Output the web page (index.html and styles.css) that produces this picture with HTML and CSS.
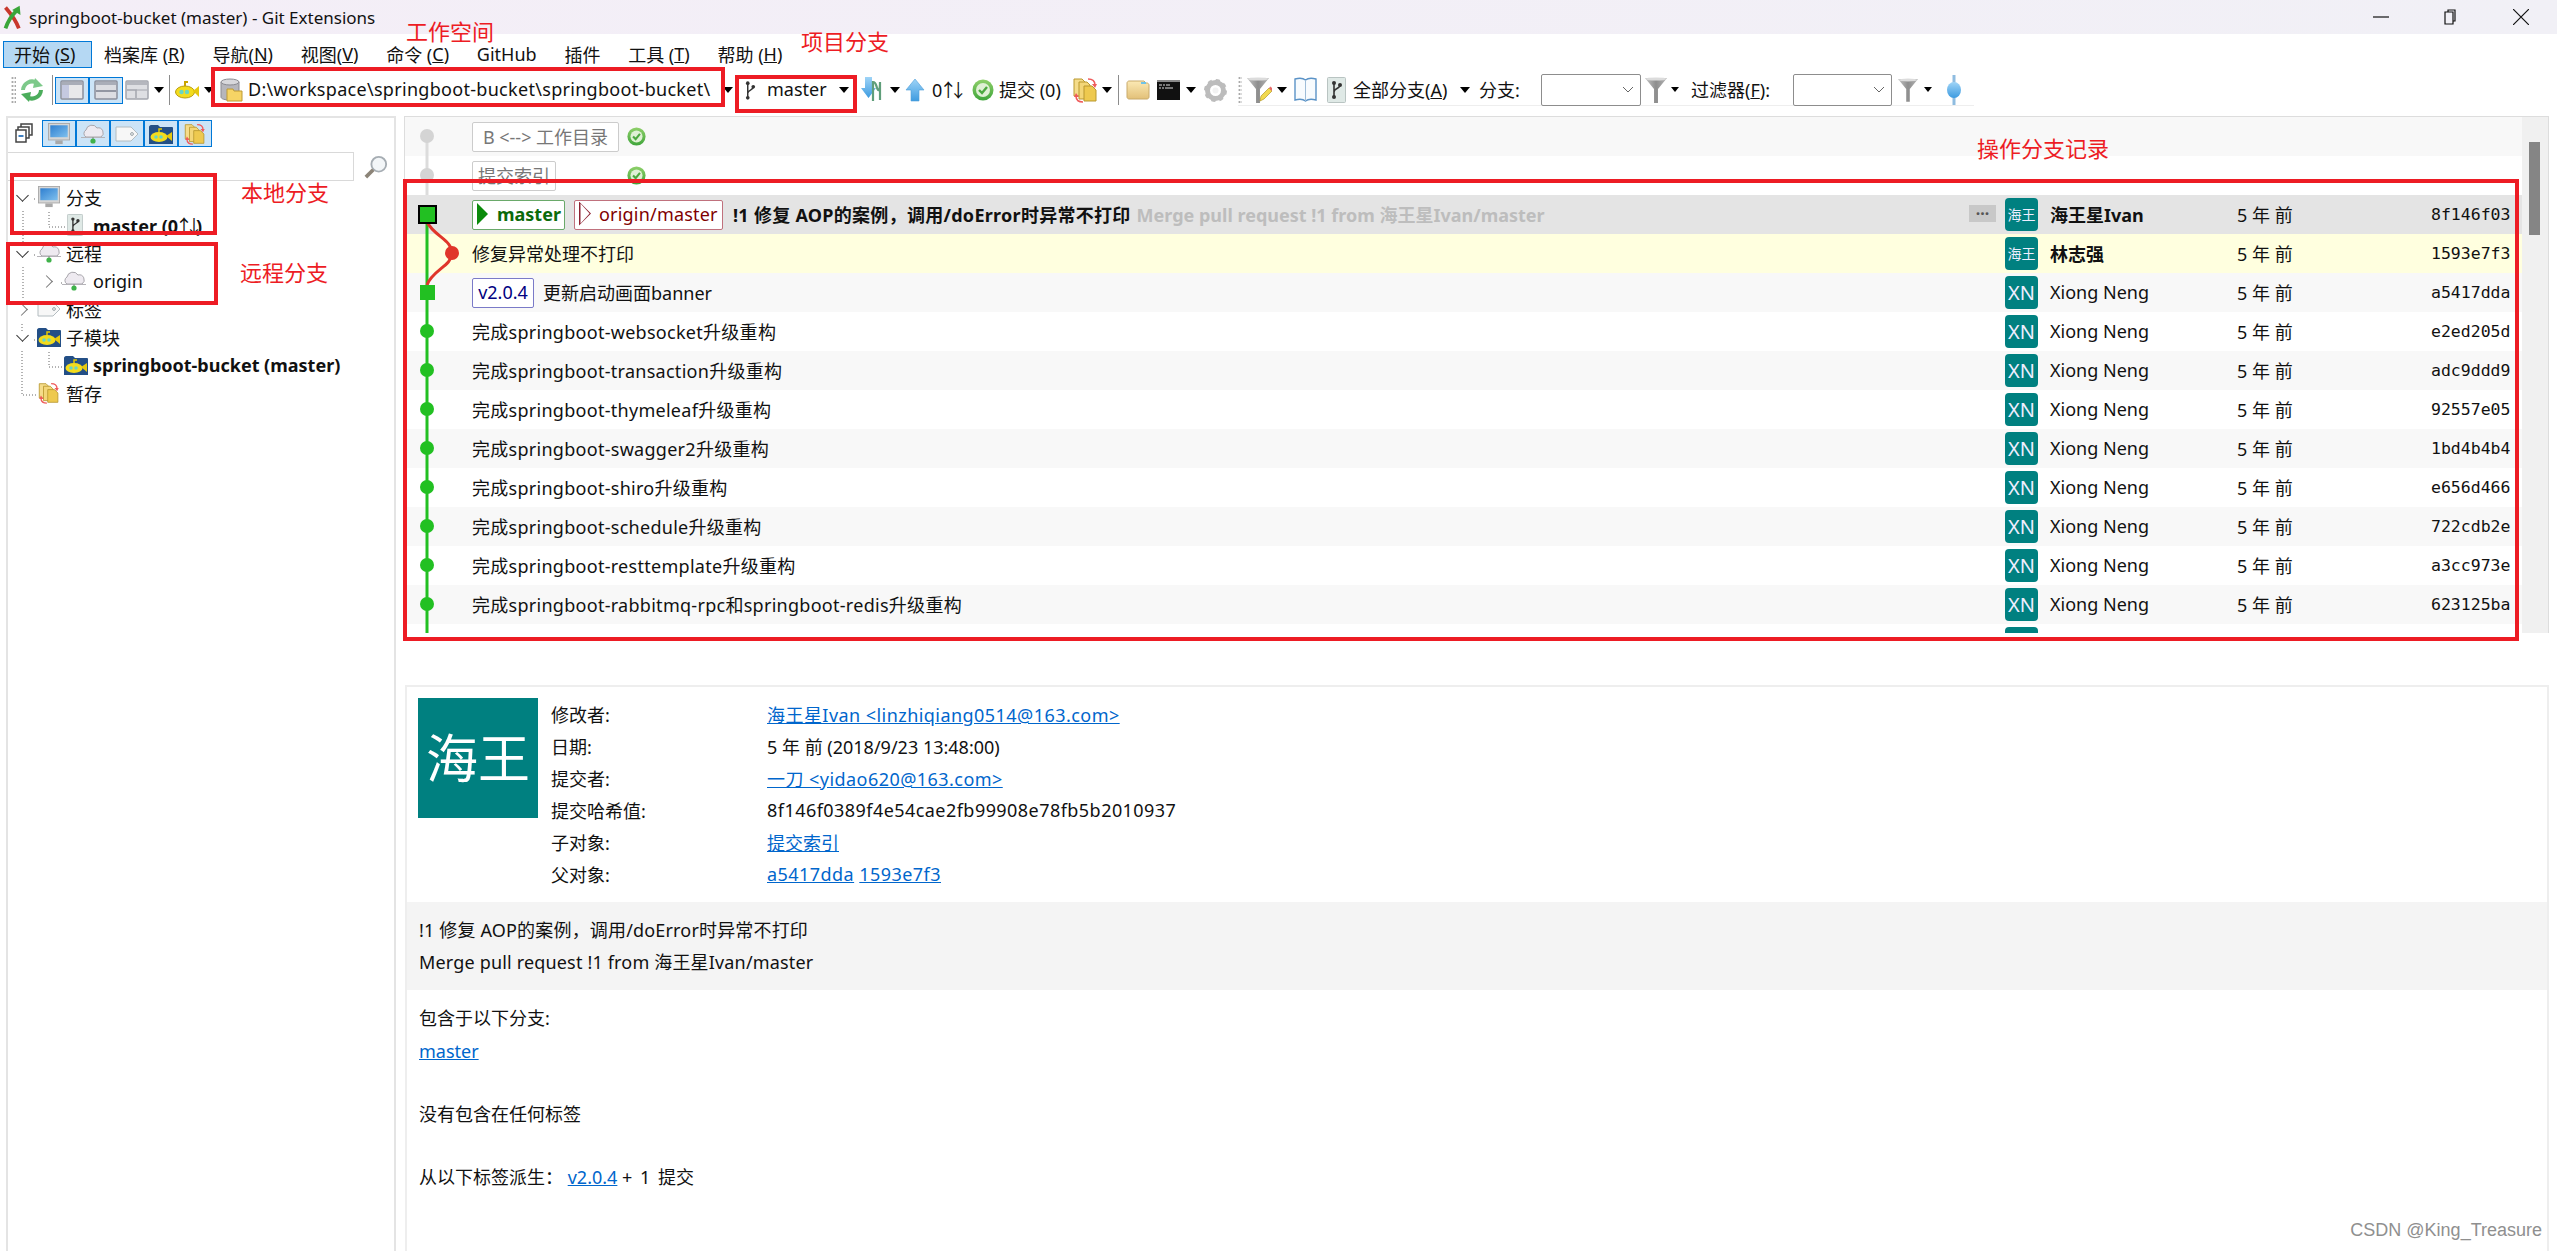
FILE: index.html
```html
<!DOCTYPE html>
<html lang="zh-CN">
<head>
    <meta charset="UTF-8">
    <title>springboot-bucket (master) - Git Extensions</title>
    <link rel="stylesheet" href="styles.css">
</head>
<body>
    <!-- shared icons -->
    <svg class="icon-defs" aria-hidden="true">
        <defs>
            <linearGradient id="g-screen" x1="0" y1="0" x2="1" y2="1"><stop offset="0" stop-color="#2f7fd0"/><stop offset="1" stop-color="#7fc0ee"/></linearGradient>
            <linearGradient id="g-folder" x1="0" y1="0" x2="0" y2="1"><stop offset="0" stop-color="#fbe9b4"/><stop offset="1" stop-color="#e2c078"/></linearGradient>
            <linearGradient id="g-funnel" x1="0" y1="0" x2="1" y2="0"><stop offset="0" stop-color="#c4c4c4"/><stop offset=".5" stop-color="#8d8d8d"/><stop offset="1" stop-color="#b5b5b5"/></linearGradient>
            <linearGradient id="g-check" x1="0" y1="0" x2="0" y2="1"><stop offset="0" stop-color="#8fd06a"/><stop offset="1" stop-color="#3fa53a"/></linearGradient>
            <linearGradient id="g-blue" x1="0" y1="0" x2="0" y2="1"><stop offset="0" stop-color="#9fd4f7"/><stop offset="1" stop-color="#3d9be0"/></linearGradient>

            <symbol id="i-logo" viewBox="0 0 24 30">
                <path d="M3 3C9 10 15 17 19 28" stroke="#c8372d" stroke-width="4.5" fill="none"/>
                <path d="M3 28C6 19 11 12 16 7" stroke="#3aa53a" stroke-width="4.5" fill="none"/>
                <polygon points="20,1 21,12 11,6" fill="#3aa53a"/>
            </symbol>
            <symbol id="i-refresh" viewBox="0 0 24 24">
                <path d="M3 12a9 9 0 0 1 14-7" stroke="#7dc98a" stroke-width="4" fill="none"/>
                <polygon points="15,0 23,8 13,10" fill="#7dc98a"/>
                <path d="M21 12a9 9 0 0 1-14 7" stroke="#4cad5c" stroke-width="4" fill="none"/>
                <polygon points="9,24 1,16 11,14" fill="#4cad5c"/>
            </symbol>
            <symbol id="i-layout-a" viewBox="0 0 24 20">
                <rect x="1" y="1" width="22" height="18" rx="1" fill="#e8e8ea" stroke="#8b8f9c" stroke-width="1.5"/>
                <rect x="2" y="2" width="20" height="3" fill="#a9adb8"/>
                <rect x="2" y="5" width="7" height="13" fill="#c5c9e0"/>
            </symbol>
            <symbol id="i-layout-b" viewBox="0 0 24 20">
                <rect x="1" y="1" width="22" height="18" rx="1" fill="#dcdde2" stroke="#8b8f9c" stroke-width="1.5"/>
                <rect x="2" y="2" width="20" height="3" fill="#a9adb8"/>
                <rect x="2" y="10" width="20" height="2" fill="#9296a2"/>
            </symbol>
            <symbol id="i-layout-c" viewBox="0 0 24 20">
                <rect x="1" y="1" width="22" height="18" rx="1" fill="#dedfe3" stroke="#a4a6ae" stroke-width="1.5"/>
                <rect x="2" y="2" width="20" height="3" fill="#b5b7be"/>
                <path d="M2 10h9v8" fill="none" stroke="#a4a6ae" stroke-width="1.5"/>
                <path d="M11 10h11" fill="none" stroke="#a4a6ae"/>
            </symbol>
            <symbol id="i-sub" viewBox="0 0 24 20">
                <path d="M10 7V2h3" stroke="#c9a400" stroke-width="2" fill="none"/>
                <ellipse cx="10" cy="12" rx="9.5" ry="6" fill="#f3dc1d" stroke="#b99c10"/>
                <polygon points="18,11 24,6 24,17" fill="#e6c80f"/>
                <circle cx="6.5" cy="12" r="2.2" fill="#69d6c2"/>
                <circle cx="12" cy="12" r="2.2" fill="#69d6c2"/>
            </symbol>
            <symbol id="i-repo" viewBox="0 0 23 24">
                <path d="M1 4v15c0 2 4 3 9 3s9-1 9-3V4" fill="#b6b6bc" stroke="#8b8b92"/>
                <ellipse cx="10" cy="4" rx="9" ry="3" fill="#d8d8dc" stroke="#8b8b92"/>
                <path d="M7 11h6l1 2h8v10H7z" fill="#f6d465" stroke="#bd9a35"/>
            </symbol>
            <symbol id="i-branch" viewBox="0 0 12 22">
                <path d="M3 3v16M3 14c0-4 6-3 6-7" stroke="#333" stroke-width="1.6" fill="none"/>
                <circle cx="3" cy="3" r="2" fill="#333"/>
                <circle cx="9" cy="7" r="2" fill="#333"/>
                <circle cx="3" cy="19" r="2" fill="#333"/>
            </symbol>
            <symbol id="i-branch-doc" viewBox="0 0 19 26">
                <rect x=".5" y=".5" width="18" height="25" rx="1" fill="#dfe9e6" stroke="#b9c4c2"/>
                <path d="M7 6v14M7 15c0-4 6-3 6-7" stroke="#333" stroke-width="1.6" fill="none"/>
                <circle cx="7" cy="6" r="2" fill="#333"/>
                <circle cx="13" cy="8" r="2" fill="#333"/>
                <circle cx="7" cy="20" r="2" fill="#333"/>
            </symbol>
            <symbol id="i-pull" viewBox="0 0 25 26">
                <path d="M5 0h7v11h4l-7.5 10L1 11h4z" fill="url(#g-blue)"/>
                <path d="M13 24V5c3 0 3 3 4 6s3 4 3-6v18" stroke="#5f9e7a" stroke-width="2.2" fill="none"/>
            </symbol>
            <symbol id="i-up" viewBox="0 0 20 24">
                <path d="M10 1l9 11h-5v11H6V12H1z" fill="url(#g-blue)" stroke="#4d9ed8" stroke-width=".6"/>
            </symbol>
            <symbol id="i-check" viewBox="0 0 22 22">
                <circle cx="11" cy="11" r="10.5" fill="url(#g-check)"/>
                <circle cx="11" cy="11" r="7" fill="#dff0d4"/>
                <path d="M7 11l3 3 5-6" stroke="#4ca83f" stroke-width="2.4" fill="none"/>
            </symbol>
            <symbol id="i-stash" viewBox="0 0 25 26">
                <path d="M1 2h8l3 3v14H1z" fill="#f5dc8a" stroke="#b9982f"/>
                <path d="M6 5h8l3 3v14H6z" fill="#f3d678" stroke="#b9982f"/>
                <path d="M11 9h8l4 4v11H11z" fill="#eec94f" stroke="#b9982f"/>
                <path d="M15 2c4 0 7 1 7 6" stroke="#ef5b5b" stroke-width="1.6" fill="none"/>
                <polygon points="19,7 24,7 22,11" fill="#ef5b5b"/>
                <path d="M10 25c-4 0-7-1-7-6" stroke="#ef5b5b" stroke-width="1.6" fill="none"/>
                <polygon points="1,20 6,20 3,16" fill="#ef5b5b"/>
            </symbol>
            <symbol id="i-folder" viewBox="0 0 24 20">
                <path d="M1 3c0-1 1-2 2-2h15l2 2h1c1 0 2 1 2 2v12c0 1-1 2-2 2H3c-1 0-2-1-2-2z" fill="url(#g-folder)" stroke="#c9aa6a"/>
                <path d="M15 2h5v2h-5z" fill="#6fc3e8"/>
            </symbol>
            <symbol id="i-console" viewBox="0 0 23 20">
                <rect width="23" height="20" fill="#111"/>
                <rect width="23" height="2" fill="#8a8a8a"/>
                <path d="M2 5h3M6 5h2M9 5h4M2 8h2M5 8h2M8 8h8" stroke="#ddd" fill="none"/>
            </symbol>
            <symbol id="i-gear" viewBox="0 0 23 23">
                <circle cx="11.5" cy="11.5" r="8" fill="none" stroke="#bcbcbc" stroke-width="5"/>
                <circle cx="11.5" cy="11.5" r="10" fill="none" stroke="#bcbcbc" stroke-width="3" stroke-dasharray="4 3.85"/>
                <circle cx="11.5" cy="11.5" r="3" fill="#f2f2f2"/>
            </symbol>
            <symbol id="i-filter" viewBox="0 0 22 26">
                <path d="M0 1h22L13 12v14H9V12z" fill="url(#g-funnel)"/>
                <ellipse cx="11" cy="2" rx="10.5" ry="1.6" fill="#dcdcdc"/>
            </symbol>
            <symbol id="i-filter-edit" viewBox="0 0 25 26">
                <path d="M0 1h22L13 12v14H9V12z" fill="url(#g-funnel)"/>
                <ellipse cx="11" cy="2" rx="10.5" ry="1.6" fill="#dcdcdc"/>
                <path d="M13 24l1-5 8-8 3 3-8 8z" fill="#f2d94e" stroke="#b59a2a" stroke-width=".7"/>
                <path d="M22 11l1.5-1.5 2 2-1 2.5z" fill="#e76a6a"/>
            </symbol>
            <symbol id="i-book" viewBox="0 0 23 26">
                <path d="M1 2c4-1 8-1 10.5 1C14 1 18 1 22 2v21c-4-1-8-1-10.5 1C9 22 5 22 1 23z" fill="#f7fbfe" stroke="#5b93c7" stroke-width="1.4"/>
                <path d="M11.5 3v21" stroke="#9dbcd8"/>
            </symbol>
            <symbol id="i-pin" viewBox="0 0 16 30">
                <path d="M8 0v30" stroke="#8fbce0" stroke-width="3"/>
                <ellipse cx="8" cy="15" rx="7" ry="8" fill="url(#g-blue)"/>
            </symbol>
            <symbol id="i-windows" viewBox="0 0 18 20">
                <path d="M6 4V1h11v11h-3M3 7V4h11v11h-3" fill="none" stroke="#444" stroke-width="1.5"/>
                <rect x="1" y="7" width="10" height="12" fill="#fff" stroke="#444" stroke-width="1.5"/>
                <path d="M3.5 13h5" stroke="#3f7fc0" stroke-width="2"/>
            </symbol>
            <symbol id="i-monitor" viewBox="0 0 24 24">
                <rect x=".5" y=".5" width="23" height="18" fill="#d6d6d6" stroke="#a8a8a8"/>
                <rect x="2.5" y="2.5" width="19" height="13" fill="url(#g-screen)"/>
                <rect x="8" y="19" width="8" height="4" fill="#a8a8a8"/>
            </symbol>
            <symbol id="i-cloud" viewBox="0 0 24 20">
                <path d="M5 13a4 4 0 0 1 0-7 6 6 0 0 1 11-2 5 5 0 0 1 4 9z" fill="#eeeaf0" stroke="#a8a6ac"/>
                <path d="M0 13.5h24" stroke="#b5b3b8"/>
                <path d="M12 13v4" stroke="#888"/>
                <circle cx="12" cy="17" r="2.6" fill="#3fb24a"/>
            </symbol>
            <symbol id="i-tag" viewBox="0 0 24 18">
                <path d="M1 2h15l7 7-7 7H1z" fill="#f7f7f7" stroke="#b3bcc0"/>
                <circle cx="17" cy="9" r="1.4" fill="none" stroke="#9aa3a7"/>
            </symbol>
            <symbol id="i-module" viewBox="0 0 24 22">
                <path d="M0 4c0-1 1-2 2-2h7l2 2h12c.5 0 1 .5 1 1v16H0z" fill="#234f86"/>
                <path d="M10 9V6h3" stroke="#e5c800" stroke-width="1.5" fill="none"/>
                <ellipse cx="10" cy="14" rx="8.5" ry="5" fill="#f3dc1d"/>
                <polygon points="17,13 23,9 23,18" fill="#e6c80f"/>
                <circle cx="7" cy="14" r="1.8" fill="#69d6c2"/>
                <circle cx="12" cy="14" r="1.8" fill="#69d6c2"/>
            </symbol>
            <symbol id="i-search" viewBox="0 0 26 26">
                <circle cx="16" cy="10" r="8" fill="#f3f6f8" stroke="#a6adb3" stroke-width="2"/>
                <path d="M10 16L2 24" stroke="#8c8478" stroke-width="4"/>
            </symbol>
        </defs>
    </svg>

    <div class="app">
        <header class="titlebar">
            <svg class="title-logo"><use href="#i-logo"/></svg>
            <span class="title-text">springboot-bucket (master) - Git Extensions</span>
            <div class="window-btns">
                <svg class="win-icon" viewBox="0 0 16 16"><path d="M0 8h16" stroke="#111" stroke-width="1.2"/></svg>
                <svg class="win-icon" viewBox="0 0 16 16"><path d="M5 3V1h7v11h-2M2 3h8v12H2z" fill="none" stroke="#111" stroke-width="1.2"/></svg>
                <svg class="win-icon" viewBox="0 0 16 16"><path d="M0 0l16 16M16 0L0 16" stroke="#111" stroke-width="1.2"/></svg>
            </div>
        </header>

        <nav class="menubar">
            <span class="menu-item active">开始 (<u>S</u>)</span>
            <span class="menu-item">档案库 (<u>R</u>)</span>
            <span class="menu-item">导航(<u>N</u>)</span>
            <span class="menu-item">视图(<u>V</u>)</span>
            <span class="menu-item">命令 (<u>C</u>)</span>
            <span class="menu-item">GitHub</span>
            <span class="menu-item">插件</span>
            <span class="menu-item">工具 (<u>T</u>)</span>
            <span class="menu-item">帮助 (<u>H</u>)</span>
        </nav>

        <div class="toolbar">
            <span class="grip"></span>
            <svg class="tb-refresh"><use href="#i-refresh"/></svg>
            <span class="sep sep-a"></span>
            <span class="tb-toggle first"><svg><use href="#i-layout-a"/></svg></span>
            <span class="tb-toggle"><svg><use href="#i-layout-b"/></svg></span>
            <svg class="tb-layout"><use href="#i-layout-c"/></svg>
            <span class="caret"></span>
            <span class="sep sep-b"></span>
            <svg class="tb-sub"><use href="#i-sub"/></svg>
            <span class="caret"></span>
            <svg class="tb-repo"><use href="#i-repo"/></svg>
            <span class="tb-text tb-path">D:\workspace\springboot-bucket\springboot-bucket\</span>
            <span class="caret caret-path"></span>
            <svg class="tb-branch"><use href="#i-branch"/></svg>
            <span class="tb-text tb-master">master</span>
            <span class="caret"></span>
            <span class="sep sep-c"></span>
            <svg class="tb-pull"><use href="#i-pull"/></svg>
            <span class="caret"></span>
            <svg class="tb-up"><use href="#i-up"/></svg>
            <span class="tb-text tb-count">0<span class="arrows">↑↓</span></span>
            <svg class="tb-check"><use href="#i-check"/></svg>
            <span class="tb-text tb-commit">提交 (0)</span>
            <svg class="tb-stash"><use href="#i-stash"/></svg>
            <span class="caret caret-stash"></span>
            <span class="sep sep-d"></span>
            <svg class="tb-folder"><use href="#i-folder"/></svg>
            <svg class="tb-console"><use href="#i-console"/></svg>
            <span class="caret caret-console"></span>
            <svg class="tb-gear"><use href="#i-gear"/></svg>

            <div class="filterstrip">
                <span class="grip"></span>
                <svg class="fs-edit"><use href="#i-filter-edit"/></svg>
                <span class="caret"></span>
                <svg class="fs-book"><use href="#i-book"/></svg>
                <svg class="fs-branch"><use href="#i-branch-doc"/></svg>
                <span class="tb-text fs-all">全部分支(<u>A</u>)</span>
                <span class="caret caret-all"></span>
                <span class="tb-text fs-label">分支:</span>
                <span class="combo combo-a"><svg viewBox="0 0 12 7"><path d="M1 1l5 5 5-5" fill="none" stroke="#666"/></svg></span>
                <svg class="fs-filter"><use href="#i-filter"/></svg>
                <span class="caret caret-small"></span>
                <span class="tb-text fs-filter-label">过滤器(<u>F</u>):</span>
                <span class="combo combo-b"><svg viewBox="0 0 12 7"><path d="M1 1l5 5 5-5" fill="none" stroke="#666"/></svg></span>
                <svg class="fs-filter fs-filter-b"><use href="#i-filter"/></svg>
                <span class="caret caret-small caret-small-b"></span>
                <svg class="fs-pin"><use href="#i-pin"/></svg>
            </div>
        </div>

        <main class="workspace">
            <aside class="sidebar">
                <div class="side-tools">
                    <svg class="side-windows"><use href="#i-windows"/></svg>
                    <span class="side-tab"><svg><use href="#i-monitor"/></svg></span>
                    <span class="side-tab"><svg><use href="#i-cloud"/></svg></span>
                    <span class="side-tab"><svg><use href="#i-tag"/></svg></span>
                    <span class="side-tab"><svg><use href="#i-module"/></svg></span>
                    <span class="side-tab"><svg><use href="#i-stash"/></svg></span>
                </div>
                <div class="side-search">
                    <span class="search-box"></span>
                    <svg class="search-icon"><use href="#i-search"/></svg>
                </div>
                <div class="tree">
                    <svg class="tree-lines" viewBox="8 184 200 230">
                        <path d="M23 210V241M23 266V297M22 323V330M22 350V394H37M34 198H37M34 254H37M34 339H37M49 211V226H67M61 282H64M49 351V366H64" fill="none" stroke="#666" stroke-dasharray="1 2"/>
                    </svg>
                    <div class="tree-row"><span class="chev open"></span><svg class="tree-icon"><use href="#i-monitor"/></svg><span>分支</span></div>
                    <div class="tree-row child"><svg class="tree-icon-doc"><use href="#i-branch-doc"/></svg><b>master (0<span class="arrows">↑↓</span>)</b></div>
                    <div class="tree-row"><span class="chev open"></span><svg class="tree-icon"><use href="#i-cloud"/></svg><span>远程</span></div>
                    <div class="tree-row child-node"><span class="chev"></span><svg class="tree-icon"><use href="#i-cloud"/></svg><span class="node-name">origin</span></div>
                    <div class="tree-row"><span class="chev"></span><svg class="tree-icon"><use href="#i-tag"/></svg><span>标签</span></div>
                    <div class="tree-row"><span class="chev open"></span><svg class="tree-icon"><use href="#i-module"/></svg><span>子模块</span></div>
                    <div class="tree-row child-mod"><svg class="tree-icon"><use href="#i-module"/></svg><b>springboot-bucket (master)</b></div>
                    <div class="tree-row"><span class="chev none"></span><svg class="tree-icon"><use href="#i-stash"/></svg><span>暂存</span></div>
                </div>
            </aside>

            <section class="content">
                <div class="revisions">
                    <div class="rows">
                        <div class="row">
                            <div class="msg"><span class="ref ref-work ref-wd">B &lt;--&gt; 工作目录</span><svg class="row-check"><use href="#i-check"/></svg></div>
                        </div>
                        <div class="row">
                            <div class="msg"><span class="ref ref-work ref-idx">提交索引</span><svg class="row-check row-check-b"><use href="#i-check"/></svg></div>
                        </div>
                        <div class="row selected">
                            <div class="msg">
                                <span class="ref ref-head"><i class="arrow"></i>master</span>
                                <span class="ref ref-remote"><i class="arrow-open"></i>origin/master</span>
                                <b class="subject">!1 修复 AOP的案例，调用/doError时异常不打印</b>
                                <b class="body-hint">Merge pull request !1 from 海王星Ivan/master</b>
                                <span class="more">···</span>
                            </div>
                            <span class="avatar small">海王</span><b class="author">海王星Ivan</b><span class="date">5 年 前</span><span class="hash">8f146f03</span>
                        </div>
                        <div class="row marked">
                            <div class="msg">修复异常处理不打印</div>
                            <span class="avatar small">海王</span><b class="author">林志强</b><span class="date">5 年 前</span><span class="hash">1593e7f3</span>
                        </div>
                        <div class="row">
                            <div class="msg"><span class="ref ref-tag">v2.0.4</span><span class="tagged">更新启动画面banner</span></div>
                            <span class="avatar">XN</span><span class="author">Xiong Neng</span><span class="date">5 年 前</span><span class="hash">a5417dda</span>
                        </div>
                        <div class="row">
                            <div class="msg">完成springboot-websocket升级重构</div>
                            <span class="avatar">XN</span><span class="author">Xiong Neng</span><span class="date">5 年 前</span><span class="hash">e2ed205d</span>
                        </div>
                        <div class="row">
                            <div class="msg">完成springboot-transaction升级重构</div>
                            <span class="avatar">XN</span><span class="author">Xiong Neng</span><span class="date">5 年 前</span><span class="hash">adc9ddd9</span>
                        </div>
                        <div class="row">
                            <div class="msg">完成springboot-thymeleaf升级重构</div>
                            <span class="avatar">XN</span><span class="author">Xiong Neng</span><span class="date">5 年 前</span><span class="hash">92557e05</span>
                        </div>
                        <div class="row">
                            <div class="msg">完成springboot-swagger2升级重构</div>
                            <span class="avatar">XN</span><span class="author">Xiong Neng</span><span class="date">5 年 前</span><span class="hash">1bd4b4b4</span>
                        </div>
                        <div class="row">
                            <div class="msg">完成springboot-shiro升级重构</div>
                            <span class="avatar">XN</span><span class="author">Xiong Neng</span><span class="date">5 年 前</span><span class="hash">e656d466</span>
                        </div>
                        <div class="row">
                            <div class="msg">完成springboot-schedule升级重构</div>
                            <span class="avatar">XN</span><span class="author">Xiong Neng</span><span class="date">5 年 前</span><span class="hash">722cdb2e</span>
                        </div>
                        <div class="row">
                            <div class="msg">完成springboot-resttemplate升级重构</div>
                            <span class="avatar">XN</span><span class="author">Xiong Neng</span><span class="date">5 年 前</span><span class="hash">a3cc973e</span>
                        </div>
                        <div class="row">
                            <div class="msg">完成springboot-rabbitmq-rpc和springboot-redis升级重构</div>
                            <span class="avatar">XN</span><span class="author">Xiong Neng</span><span class="date">5 年 前</span><span class="hash">623125ba</span>
                        </div>
                        <div class="row">
                            <div class="msg"></div>
                            <span class="avatar cut"></span>
                        </div>
                    </div>
                    <div class="vscroll"><span class="thumb"></span></div>

                    <!-- commit graph, in page coordinates -->
                    <svg class="graph" viewBox="405 117 70 516">
                        <path d="M427 130V195" stroke="#dcdcdc" stroke-width="3" fill="none"/>
                        <circle cx="427" cy="136" r="7" fill="#d4d4d4"/>
                        <circle cx="427" cy="175" r="7" fill="#d4d4d4"/>
                        <path d="M427 214V633" stroke="#22c022" stroke-width="3" fill="none"/>
                        <path d="M427 222C434 236 452 240 452 253C452 266 432 270 427 285" stroke="#e0352b" stroke-width="3" fill="none"/>
                        <circle cx="452" cy="253" r="7" fill="#e0352b"/>
                        <rect x="419" y="206" width="17" height="17" fill="#22c022" stroke="#000" stroke-width="2"/>
                        <rect x="420" y="285" width="15" height="15" fill="#22c022"/>
                        <circle cx="427" cy="331" r="7" fill="#22c022"/>
                        <circle cx="427" cy="370" r="7" fill="#22c022"/>
                        <circle cx="427" cy="409" r="7" fill="#22c022"/>
                        <circle cx="427" cy="448" r="7" fill="#22c022"/>
                        <circle cx="427" cy="487" r="7" fill="#22c022"/>
                        <circle cx="427" cy="526" r="7" fill="#22c022"/>
                        <circle cx="427" cy="565" r="7" fill="#22c022"/>
                        <circle cx="427" cy="604" r="7" fill="#22c022"/>
                    </svg>
                </div>

                <div class="details">
                    <div class="head">
                        <span class="big-avatar">海王</span>
                        <dl class="meta">
                            <dt>修改者:</dt><dd class="wide"><a href="#">海王星Ivan &lt;linzhiqiang0514@163.com&gt;</a></dd>
                            <dt>日期:</dt><dd>5 年 前 (2018/9/23 13:48:00)</dd>
                            <dt>提交者:</dt><dd class="wide"><a href="#">一刀 &lt;yidao620@163.com&gt;</a></dd>
                            <dt>提交哈希值:</dt><dd class="wide">8f146f0389f4e54cae2fb99908e78fb5b2010937</dd>
                            <dt>子对象:</dt><dd><a href="#">提交索引</a></dd>
                            <dt>父对象:</dt><dd class="wide"><a href="#">a5417dda</a> <a href="#">1593e7f3</a></dd>
                        </dl>
                    </div>
                    <div class="commit-msg">
                        <p>!1 修复 AOP的案例，调用/doError时异常不打印</p>
                        <p>Merge pull request !1 from 海王星Ivan/master</p>
                    </div>
                    <div class="refs">
                        <p>包含于以下分支:</p>
                        <p><a href="#">master</a></p>
                        <p class="spaced">没有包含在任何标签</p>
                        <p class="spaced">从以下标签派生： <a href="#">v2.0.4</a> <span class="ahead">+ 1 提交</span></p>
                    </div>
                </div>
            </section>
        </main>

        <!-- red annotations drawn over the screenshot -->
        <span class="box box-path"></span>
        <span class="box box-master"></span>
        <span class="box box-local"></span>
        <span class="box box-remote"></span>
        <span class="box box-log"></span>
        <span class="note note-space">工作空间</span>
        <span class="note note-branch">项目分支</span>
        <span class="note note-local">本地分支</span>
        <span class="note note-remote">远程分支</span>
        <span class="note note-log">操作分支记录</span>
        <span class="watermark">CSDN @King_Treasure</span>
    </div>
</body>
</html>
```

FILE: styles.css
```css
* {
    margin: 0;
    padding: 0;
    box-sizing: border-box;
}

body {
    width: 2557px;
    height: 1251px;
    overflow: hidden;
    background: #fff;
    color: #111;
    font-family: "Noto Sans", "Noto Sans CJK SC", sans-serif;
    font-size: 18px;
}

svg {
    display: block;
    flex: none;
}

.icon-defs {
    position: absolute;
    width: 0;
    height: 0;
}

.app {
    position: relative;
    height: 1251px;
}

/* narrow up/down arrows next to a count */
.arrows {
    display: inline-block;
    margin: 0 1px 0 -3px;
    letter-spacing: -8px;
    font-weight: 400;
}

/* title bar */
.titlebar {
    display: flex;
    align-items: center;
    height: 34px;
    padding-left: 3px;
    background: linear-gradient(90deg, #f4eef7, #f1f0f6);
}

.title-logo {
    width: 20px;
    height: 25px;
}

.title-text {
    margin-left: 6px;
    font-size: 17px;
}

.window-btns {
    display: flex;
    gap: 54px;
    margin-left: auto;
    margin-right: 28px;
}

.win-icon {
    width: 16px;
    height: 16px;
}

/* menu */
.menubar {
    display: flex;
    height: 34px;
    padding: 7px 0 0 3px;
}

.menu-item {
    display: flex;
    align-items: center;
    height: 27px;
    padding: 0 13.9px 2px;
    white-space: pre;
}

.menu-item.active {
    width: 89px;
    padding: 0 10px 2px;
    margin-right: -1.9px;
    background: #b5d8f3;
    border: 1px solid #0078d7;
}

/* toolbar */
.toolbar {
    display: flex;
    align-items: center;
    height: 48px;
    padding: 0 0 4px 11px;
    white-space: nowrap;
}

.tb-text {
    margin-bottom: 2px;
}

.grip {
    width: 5px;
    height: 28px;
    background: radial-gradient(circle, #aaa 1px, transparent 1.2px) 0 0 / 3px 4px;
}

.sep {
    width: 1px;
    height: 30px;
    background: #8c8c8c;
}

.sep-a { margin-left: 8px; }
.sep-b { margin-left: 5px; }
.sep-c { margin-left: 7px; }
.sep-d { margin-left: 6px; }

.caret {
    width: 0;
    height: 0;
    margin-left: 5px;
    border-left: 5.5px solid transparent;
    border-right: 5.5px solid transparent;
    border-top: 6px solid #000;
}

.caret-path { margin-left: 11px; }
.caret-stash { margin-left: 4px; }
.caret-console { margin-left: 6px; }
.caret-all { margin-left: 10px; }

.caret-small {
    margin-left: 4px;
    border-left-width: 4px;
    border-right-width: 4px;
    border-top-width: 5px;
}

.caret-small-b { margin-left: 6px; }

.tb-refresh { width: 24px; height: 24px; margin-left: 4px; }

.tb-toggle {
    display: flex;
    align-items: center;
    justify-content: center;
    width: 34px;
    height: 27px;
    background: #cce4f7;
    border: 1px solid #0078d7;
}

.tb-toggle.first { margin-left: 2px; }
.tb-toggle svg { width: 24px; height: 20px; }

.tb-layout { width: 24px; height: 20px; margin-left: 2px; }
.tb-sub { width: 24px; height: 20px; margin-left: 5px; }
.tb-repo { width: 23px; height: 24px; margin-left: 6px; }
.tb-path { width: 464px; margin-left: 5px; letter-spacing: .3px; }
.tb-branch { width: 11px; height: 21px; margin-left: 12px; }
.tb-master { width: 67px; margin-left: 11px; }
.tb-pull { width: 25px; height: 26px; margin-left: 3px; }
.tb-up { width: 20px; height: 24px; margin-left: 5px; }
.tb-count { width: 29px; margin-left: 7px; }
.tb-check { width: 22px; height: 22px; margin-left: 11px; }
.tb-commit { width: 64px; margin-left: 5px; }
.tb-stash { width: 25px; height: 26px; margin-left: 10px; }
.tb-folder { width: 24px; height: 20px; margin-left: 7px; }
.tb-console { width: 23px; height: 20px; margin-left: 7px; }
.tb-gear { width: 23px; height: 23px; margin-left: 8px; }

.filterstrip {
    display: flex;
    align-items: center;
    height: 32px;
    margin-left: 11px;
    padding-right: 12px;
    border-bottom: 1px solid #eee;
}

.filterstrip .grip { width: 4px; }

.fs-edit { width: 25px; height: 26px; margin-left: 5px; }
.fs-book { width: 23px; height: 26px; margin-left: 7px; }
.fs-branch { width: 19px; height: 26px; margin-left: 10px; }
.fs-all { width: 97px; margin-left: 7px; }
.fs-label { width: 43px; margin-left: 9px; }
.fs-filter { width: 22px; height: 26px; margin-left: 4px; }
.fs-filter-b { width: 20px; margin-left: 6px; }
.fs-filter-label { width: 84px; margin-left: 12px; }
.fs-pin { width: 16px; height: 30px; margin-left: 14px; }

.combo {
    display: flex;
    align-items: center;
    justify-content: flex-end;
    width: 100px;
    height: 32px;
    padding-right: 6px;
    background: #fff;
    border: 1px solid #8d8d8d;
    border-radius: 2px;
}

.combo svg { width: 12px; height: 7px; }
.combo-a { margin-left: 19px; }
.combo-b { width: 99px; margin-left: 18px; }

/* main split */
.workspace {
    display: flex;
    gap: 8px;
    height: 1135px;
    padding-left: 6px;
}

/* left tree */
.sidebar {
    width: 390px;
    padding: 2px 0 0;
    border: 2px solid #e4e4e4;
    border-bottom: 0;
}

.side-tools {
    display: flex;
    align-items: center;
    height: 27px;
    padding-left: 34px;
}

.side-windows {
    position: absolute;
    left: 15px;
    top: 123px;
    width: 18px;
    height: 20px;
}

.side-tab {
    display: flex;
    align-items: center;
    justify-content: center;
    width: 34px;
    height: 27px;
    background: #cce4f7;
    border: 1px solid #0078d7;
}

.side-tab svg { width: 24px; height: 22px; }

.side-search {
    display: flex;
    align-items: center;
    gap: 9px;
    height: 29px;
    margin-top: 5px;
}

.search-box {
    width: 346px;
    height: 29px;
    background: #fff;
    border: 1px solid #d9d9d9;
    border-left: 0;
}

.search-icon { width: 26px; height: 24px; }

.tree {
    position: relative;
    margin-top: 3px;
}

.tree-lines {
    position: absolute;
    left: 0;
    top: 1px;
    width: 200px;
    height: 230px;
}

.tree-row {
    position: relative;
    display: flex;
    align-items: center;
    height: 28px;
    padding: 0 0 2px 8px;
    white-space: nowrap;
}

.tree-row b { margin-left: 10px; }

.tree-row.child { padding-left: 59px; }
.tree-row.child-node { padding-left: 33px; }
.tree-row.child-mod { padding-left: 47px; }
.tree-row.child-mod b { margin-left: 0; }
.node-name { margin-left: 2px; }

.chev {
    flex: none;
    width: 12px;
    height: 12px;
    position: relative;
}

.chev::before {
    content: "";
    position: absolute;
    left: 1px;
    top: 2px;
    width: 8px;
    height: 8px;
    border-right: 1.5px solid #777;
    border-bottom: 1.5px solid #777;
    transform: rotate(-45deg);
}

.chev.open::before {
    left: 2px;
    top: 0;
    border-color: #333;
    transform: rotate(45deg);
}

.chev.none::before { display: none; }

.tree-icon {
    width: 24px;
    height: 22px;
    margin-left: 9px;
    margin-right: 5px;
}

.tree-icon-doc { width: 16px; height: 22px; }

/* right column */
.content {
    flex: 1;
    min-width: 0;
    margin-right: 8px;
}

.revisions {
    position: relative;
    display: flex;
    height: 517px;
    overflow: hidden;
    border-top: 1px solid #ddd;
    border-left: 1px solid #ddd;
    border-right: 1px solid #ddd;
}

.rows {
    flex: 1;
    min-width: 0;
}

.row {
    display: flex;
    align-items: center;
    height: 39px;
    white-space: nowrap;
}

.row:nth-child(odd) { background: #f8f8f8; }
.row.selected { background: #e4e4e4; }
.row.marked { background: #ffffdf; }

.msg {
    display: flex;
    align-items: center;
    flex: 1;
    min-width: 0;
    margin-bottom: 2px;
    padding: 0 9px 0 67px;
}

.row:nth-child(n+6) .msg { letter-spacing: .28px; }

.ref {
    display: flex;
    align-items: center;
    height: 30px;
    margin-top: 2px;
    padding: 0 4px 2px;
    background: #fff;
    border: 1px solid #ccc;
    border-radius: 2px;
}

.ref-work {
    justify-content: center;
    color: #777;
}

.ref-wd { width: 147px; }
.ref-idx { width: 84px; }

.row-check {
    width: 19px;
    height: 19px;
    margin-top: 2px;
    margin-left: 8px;
}

.row-check-b { margin-left: 71px; }

.ref-head {
    width: 93px;
    color: #0b6b0b;
    font-weight: 700;
    border-color: #6aa96a;
}

.arrow {
    width: 0;
    height: 0;
    margin-right: 9px;
    border-top: 11.5px solid transparent;
    border-bottom: 11.5px solid transparent;
    border-left: 11px solid #0a8a0a;
}

.ref-remote {
    width: 149px;
    margin-left: 9px;
    color: #800000;
    letter-spacing: .2px;
    border-color: #c0717d;
}

.arrow-open {
    width: 12px;
    height: 24px;
    margin-right: 8px;
    background: #8c2030;
    clip-path: polygon(0 0, 100% 50%, 0 100%, 0 0, 1.5px 8%, 1.5px 92%, 88% 50%, 1.5px 8%);
}

.subject {
    margin-left: 10px;
    letter-spacing: .28px;
}

.body-hint {
    margin-left: 6px;
    color: #bdbdbd;
}

.more {
    margin-left: auto;
    width: 27px;
    height: 17px;
    background: #c8c8c8;
    color: #555;
    font-size: 16px;
    font-weight: 700;
    line-height: 16px;
    text-align: center;
}

.ref-tag {
    width: 62px;
    justify-content: center;
    color: #000080;
    border-color: #7a7ac8;
}

.tagged { margin-left: 9px; }

.avatar {
    flex: none;
    width: 33px;
    height: 33px;
    background: #008080;
    border-radius: 4px;
    color: #eef;
    font-size: 20px;
    line-height: 33px;
    text-align: center;
}

.avatar.small { font-size: 14px; }
.avatar.cut { margin-right: 484px; }

.author {
    flex: none;
    width: 187px;
    margin-bottom: 2px;
    margin-left: 12px;
}

.date {
    flex: none;
    width: 194px;
    margin-bottom: 2px;
}

.hash {
    flex: none;
    width: 91px;
    font-family: "DejaVu Sans Mono", monospace;
    font-size: 16.5px;
}

.vscroll {
    flex: none;
    width: 26px;
    padding: 25px 0 0 7px;
    background: #f0f0f0;
}

.thumb {
    display: block;
    width: 11px;
    height: 93px;
    background: #858585;
}

.graph {
    position: absolute;
    left: 0;
    top: 0;
    width: 70px;
    height: 516px;
}

/* commit details */
.details {
    height: 566px;
    margin-top: 52px;
    margin-left: 1px;
    border-top: 2px solid #eee;
    border-left: 2px solid #eee;
    border-right: 2px solid #eee;
}

.head {
    display: flex;
    padding: 11px 0 12px 11px;
}

.big-avatar {
    flex: none;
    width: 120px;
    height: 120px;
    background: #008080;
    color: #fff;
    font-size: 52px;
    line-height: 120px;
    text-align: center;
}

.meta {
    display: grid;
    grid-template-columns: 216px 1fr;
    grid-auto-rows: 32px;
    align-items: center;
    margin-left: 13px;
}

.meta .wide { letter-spacing: .45px; }

a {
    color: #0066cc;
}

.commit-msg {
    height: 88px;
    padding: 12px 0 0 12px;
    background: #f4f4f4;
    letter-spacing: .17px;
}

.commit-msg p,
.refs p {
    line-height: 32px;
}

.refs {
    padding: 12px 0 0 12px;
}

.refs p + p { margin-top: 1px; }
.refs p.spaced { margin-top: 31px; }

.ahead { word-spacing: 3px; }

/* annotations */
.box {
    position: absolute;
    border: 4px solid #ed1c24;
    pointer-events: none;
}

.box-path { left: 211px; top: 67px; width: 514px; height: 40px; }
.box-master { left: 735px; top: 75px; width: 122px; height: 38px; }
.box-local { left: 10px; top: 173px; width: 207px; height: 62px; }
.box-remote { left: 6px; top: 242px; width: 212px; height: 63px; }
.box-log { left: 403px; top: 179px; width: 2116px; height: 462px; }

.note {
    position: absolute;
    color: #ed1c24;
    font-size: 22px;
    line-height: 30px;
    white-space: nowrap;
}

.note-space { left: 406px; top: 16px; }
.note-branch { left: 801px; top: 26px; }
.note-local { left: 241px; top: 177px; }
.note-remote { left: 240px; top: 257px; }
.note-log { left: 1977px; top: 133px; }

.watermark {
    position: absolute;
    right: 15px;
    top: 1220px;
    color: #8f8f8f;
    font-family: "Liberation Sans", sans-serif;
    font-size: 18px;
}
```
